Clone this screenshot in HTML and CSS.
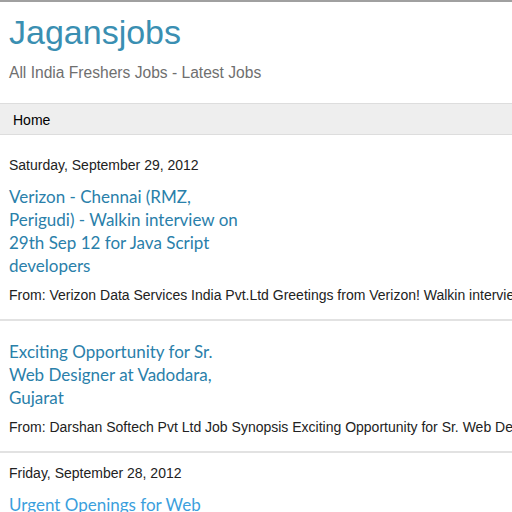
FILE: index.html
```html
<!DOCTYPE html>
<html lang="en">
<head>
  <meta charset="UTF-8">
  <title>Jagansjobs</title>
  <link rel="stylesheet" href="styles.css">
</head>
<body>
  <div class="header">
    <h1 class="blog-title">Jagansjobs</h1>
    <p class="blog-desc">All India Freshers Jobs - Latest Jobs</p>
  </div>
  <div class="tabs">
    <a href="#" class="tab">Home</a>
  </div>
  <div class="main">
    <div class="day">
      <h2 class="date">Saturday, September 29, 2012</h2>
      <div class="post">
        <h3 class="post-title"><a href="#">Verizon - Chennai (RMZ, Perigudi) - Walkin interview on 29th Sep 12 for Java Script developers</a></h3>
        <p class="snippet">From: Verizon Data Services India Pvt.Ltd Greetings from Verizon! Walkin interview on 29th Sep 12 for Java Script developers</p>
      </div>
      <div class="post">
        <h3 class="post-title"><a href="#">Exciting Opportunity for Sr. Web Designer at Vadodara, Gujarat</a></h3>
        <p class="snippet">From: Darshan Softech Pvt Ltd Job Synopsis Exciting Opportunity for Sr. Web Designer at Vadodara</p>
      </div>
    </div>
    <div class="day">
      <h2 class="date">Friday, September 28, 2012</h2>
      <div class="post">
        <h3 class="post-title"><a href="#" class="fresh">Urgent Openings for Web Developers</a></h3>
      </div>
    </div>
  </div>
</body>
</html>
```

FILE: styles.css
```css
body { margin: 0; background: #fff; color: #222; font-family: Arial, "Liberation Sans", sans-serif; font-size: 14px; border-top: 2px solid #a0a0a0; overflow: hidden; }
.header { padding: 12px 9px 0; height: 89px; }
.blog-title { margin: 0; font-size: 34px; font-weight: normal; color: #3a8fb2; line-height: 36px; }
.blog-desc { margin: 14px 0 0; font-size: 15.6px; color: #6f6f6f; line-height: 18px; }
.tabs { background: #eee; border-top: 1px solid #ddd; border-bottom: 1px solid #ddd; height: 30px; padding: 0 13px; display: flex; align-items: center; }
.tab { color: #000; text-decoration: none; font-size: 14px; padding-top: 2px; }
.date { margin: 0; padding: 22px 9px 0; font-size: 14px; font-weight: normal; color: #222; line-height: 16px; }
.day + .day .date { padding-top: 12px; }
.post { padding: 12px 9px 0; border-bottom: 2px solid #e2e2e2; }
.day .post + .post { padding-top: 19px; }
.day:last-child .post { border-bottom: none; }
.post-title { margin: 0; width: 236px; font-family: Lato, "Open Sans", sans-serif; font-size: 17px; font-weight: normal; line-height: 23px; }
.post-title a { color: #2a80aa; text-decoration: none; }
.post-title a.fresh { color: #3b9fdd; }
.snippet { margin: 10px 0 0; padding-bottom: 16px; white-space: nowrap; line-height: 16px; }
```
